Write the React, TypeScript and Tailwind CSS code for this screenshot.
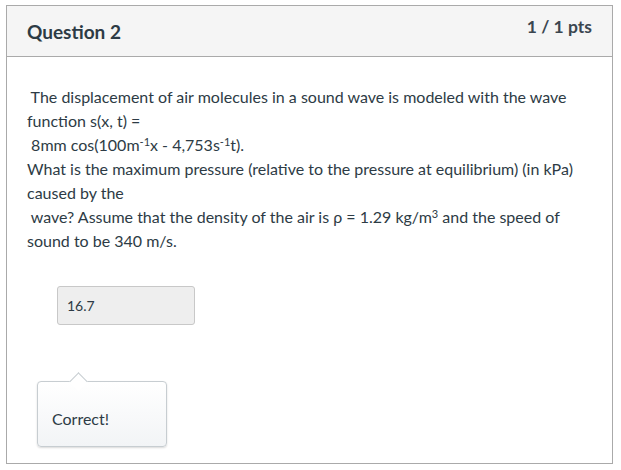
import React from "react";

export default function App() {
  return (
    <div className="w-[621px] h-[470px] bg-white pt-[5px] pl-[6px]" style={{ fontFamily: "Lato, 'Liberation Sans', sans-serif" }}>
      <div className="w-[607px] h-[459px] border border-[#aaaaaa] flex flex-col">
        <div className="h-[51px] bg-[#f5f5f5] border-b border-[#aaaaaa] flex items-center justify-between pl-[20px] pr-[20px] text-[#2d3b45]">
          <div className="text-[19px] font-bold mt-[3px]">Question 2</div>
          <div className="text-[17.5px] font-bold -mt-[8px] text-[#3b4650]">1 / 1 pts</div>
        </div>
        <div className="pl-[20px] pt-[28px] text-[16px] leading-[24px] text-[#2d3b45]">
          <p>&nbsp;The displacement of air molecules in a sound wave is modeled with the wave<br />function s(x, t) =</p>
          <p>&nbsp;8mm cos(100m<sup className="text-[11px] leading-none">-1</sup>x - 4,753s<sup className="text-[11px] leading-none">-1</sup>t).</p>
          <p>What is the maximum pressure (relative to the pressure at equilibrium) (in kPa)<br />caused by the</p>
          <p>&nbsp;wave? Assume that the density of the air is ρ = 1.29 kg/m<sup className="text-[11px] leading-none">3</sup> and the speed of<br />sound to be 340 m/s.</p>
          <div className="mt-[33px] ml-[30px] w-[138px] h-[39px] bg-[#eeeeee] border border-[#c8c8c8] rounded-[3px] flex items-center pl-[9px] text-[14px]">16.7</div>
          <div className="relative mt-[56px] ml-[10px] w-[130px] h-[66px] rounded-[4px] border border-[#c7cdd1] bg-gradient-to-b from-white to-[#f2f4f6] shadow-[0_1px_2px_rgba(0,0,0,0.15)] flex items-end pb-[15px] pl-[14px] text-[16px]">
            <div className="absolute -top-[7px] left-[34px] w-[13px] h-[13px] bg-white border-l border-t border-[#c7cdd1] rotate-45"></div>
            <span className="relative">Correct!</span>
          </div>
        </div>
      </div>
    </div>
  );
}
